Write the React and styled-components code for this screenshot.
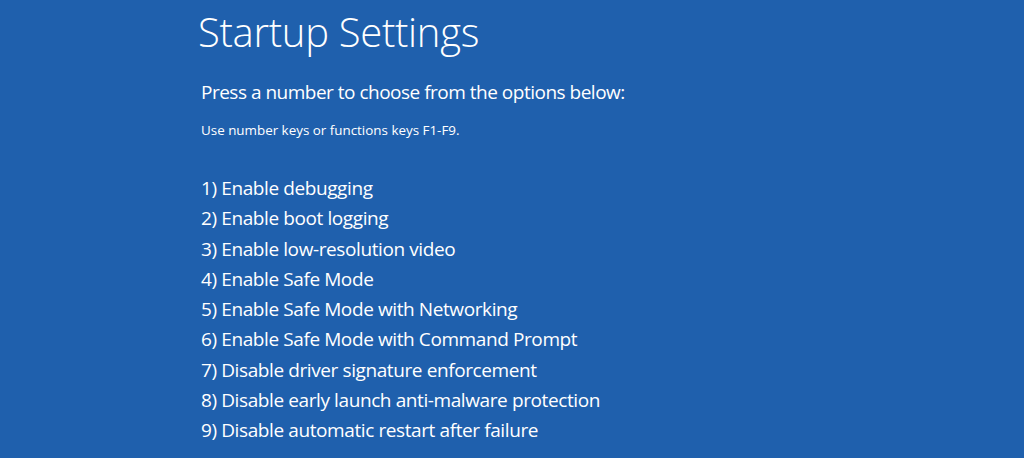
import React from "react";
import styled, { createGlobalStyle } from "styled-components";

const GlobalStyle = createGlobalStyle`
  html, body {
    margin: 0;
    padding: 0;
    background: #1f60ad;
  }
  body {
    font-family: "Open Sans", "Noto Sans", sans-serif;
    color: #ffffff;
  }
`;

const options = [
  "Enable debugging",
  "Enable boot logging",
  "Enable low-resolution video",
  "Enable Safe Mode",
  "Enable Safe Mode with Networking",
  "Enable Safe Mode with Command Prompt",
  "Disable driver signature enforcement",
  "Disable early launch anti-malware protection",
  "Disable automatic restart after failure",
];

export default function App() {
  return (
    <>
      <GlobalStyle />
      <Screen>
        <Title>Startup Settings</Title>
        <Prompt>Press a number to choose from the options below:</Prompt>
        <Hint>Use number keys or functions keys F1-F9.</Hint>
        <OptionList>
          {options.map((text, i) => (
            <Option key={i}>
              {i + 1}) {text}
            </Option>
          ))}
        </OptionList>
      </Screen>
    </>
  );
}

const Screen = styled.main`
  width: 1024px;
  height: 458px;
  box-sizing: border-box;
  padding: 4px 0 0 198px;
  background: #1f60ad;
  overflow: hidden;
`;

const Title = styled.h1`
  margin: 0;
  font-size: 40px;
  font-weight: 300;
  line-height: 56px;
  letter-spacing: -0.3px;
`;

const Prompt = styled.p`
  margin: 19px 0 0 3px;
  font-size: 19px;
  font-weight: 400;
  line-height: 26px;
  letter-spacing: -0.5px;
`;

const Hint = styled.p`
  margin: 16px 0 0 3px;
  font-size: 13.4px;
  line-height: 18px;
  letter-spacing: 0;
`;

const OptionList = styled.ol`
  list-style: none;
  margin: 34px 0 0 3px;
  padding: 0;
`;

const Option = styled.li`
  font-size: 19px;
  line-height: 30.3px;
  letter-spacing: -0.4px;
`;
